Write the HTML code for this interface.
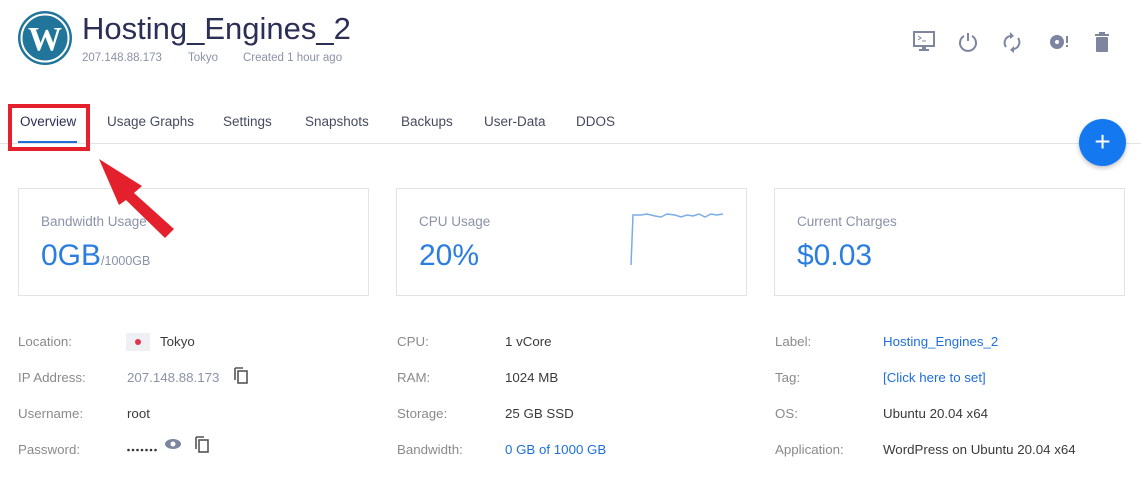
<!DOCTYPE html>
<html><head><meta charset="utf-8"><style>
*{margin:0;padding:0;box-sizing:border-box}
body{width:1141px;height:483px;background:#fff;font-family:"Liberation Sans",sans-serif;position:relative;overflow:hidden;color:#414141}
.a{position:absolute;white-space:nowrap}
.lab{color:#8a8a8a;font-size:13.3px}
.val{color:#3a3a3a;font-size:13.3px}
.blue{color:#1e6fdc}
.card{position:absolute;top:188px;width:351px;height:108px;border:1px solid #e3e3e3}
.ct{position:absolute;left:22px;top:25px;font-size:13.5px;color:#8a92a8}
.cv{position:absolute;left:22px;top:50px;font-size:30px;color:#2b7de0;font-weight:300}
.tab{position:absolute;top:114px;font-size:13.5px;color:#454b5e}
</style></head><body>
<svg class="a" style="left:18px;top:11px" width="54" height="54" viewBox="0 0 54 54">
<circle cx="27" cy="27" r="27" fill="#21759b"/><circle cx="27" cy="27" r="23.5" fill="none" stroke="#fff" stroke-width="2"/>
<text x="27" y="39" font-family="Liberation Serif" font-weight="bold" font-size="34" fill="#fff" text-anchor="middle">W</text></svg>
<div class="a" style="left:82px;top:11px;font-size:31px;color:#2b2f55">Hosting_Engines_2</div>
<div class="a" style="left:82px;top:52px;font-size:11.5px;color:#8a92a8">207.148.88.173</div>
<div class="a" style="left:188px;top:52px;font-size:11.5px;color:#8a92a8">Tokyo</div>
<div class="a" style="left:243px;top:52px;font-size:11.5px;color:#8a92a8">Created 1 hour ago</div>
<svg class="a" style="left:910px;top:28px" width="210" height="30" viewBox="0 0 210 30" fill="#7d869e">
<rect x="4" y="4" width="20" height="14" fill="none" stroke="#7d869e" stroke-width="2"/><path d="M8 8l3 2-3 2M12 13h4" stroke="#7d869e" stroke-width="1" fill="none"/><rect x="12" y="18" width="4" height="3"/><rect x="9" y="21" width="10" height="2"/>
<path d="M58 5v8M54 8a8 8 0 1 0 8 0" stroke="#7d869e" stroke-width="2" fill="none"/>
<path d="M100 8a7 7 0 0 0-4 11M108 10a7 7 0 0 1-4 11" stroke="#7d869e" stroke-width="2" fill="none"/><path d="M100 4l4 4-4 3zM104 18l-4 4 4 3z"/>
<circle cx="147" cy="14" r="7"/><circle cx="147" cy="14" r="2" fill="#fff"/><rect x="156" y="8" width="2" height="7"/><rect x="156" y="17" width="2" height="2"/>
<rect x="186" y="9" width="12" height="15" rx="1"/><rect x="185" y="6" width="14" height="2"/><rect x="189" y="4" width="6" height="2"/>
</svg>
<div class="tab" style="left:20px;color:#2b2f55">Overview</div>
<div class="a" style="left:18px;top:141px;width:59px;height:3px;background:#1e6fdc"></div>
<div class="tab" style="left:107px">Usage Graphs</div>
<div class="tab" style="left:223px">Settings</div>
<div class="tab" style="left:305px">Snapshots</div>
<div class="tab" style="left:401px">Backups</div>
<div class="tab" style="left:484px">User-Data</div>
<div class="tab" style="left:576px">DDOS</div>
<div class="a" style="left:0;top:143px;width:1141px;height:1px;background:#e3e3e3"></div>
<div class="a" style="left:8px;top:104px;width:82px;height:47px;border:4px solid #e3202b"></div>
<div class="a" style="left:1079px;top:119px;width:47px;height:47px;border-radius:50%;background:#1479f0;box-shadow:0 2px 5px rgba(0,0,0,.25);color:#fff;font-size:28px;text-align:center;line-height:45px">+</div>
<div class="card" style="left:18px"><div class="ct">Bandwidth Usage</div><div class="cv">0GB<span style="font-size:12.5px;color:#8a92a8;font-weight:normal">/1000GB</span></div></div>
<div class="card" style="left:396px"><div class="ct">CPU Usage</div><div class="cv">20%</div>
<svg class="a" style="left:230px;top:20px" width="100" height="60"><polyline points="4,56 6,6 14,6 20,5 28,7 34,8 40,5 48,6 54,8 60,6 66,7 72,5 78,8 84,5 90,6 96,5" fill="none" stroke="#7aade6" stroke-width="1.5"/></svg></div>
<div class="card" style="left:774px"><div class="ct">Current Charges</div><div class="cv">$0.03</div></div>
<svg class="a" style="left:0;top:0" width="200" height="260"><polygon points="99,159 142,186 134,193 174,229 165,238 126,200 119,205" fill="#e3202b"/></svg>
<div class="a lab" style="left:18px;top:334px">Location:</div>
<div class="a" style="left:126px;top:333px;width:24px;height:18px;background:#eff0f4"></div><div class="a" style="left:135px;top:339px;width:6px;height:6px;border-radius:50%;background:#e0344c"></div>
<div class="a val" style="left:160px;top:334px">Tokyo</div>
<div class="a lab" style="left:18px;top:370px">IP Address:</div>
<div class="a" style="left:127px;top:370px;font-size:13.3px;color:#8a92a8">207.148.88.173</div>
<svg class="a" style="left:233px;top:367px" width="16" height="18"><path d="M2 1v12M2 1h8" stroke="#555" stroke-width="1.6" fill="none"/><rect x="5" y="4" width="9" height="12" fill="none" stroke="#555" stroke-width="1.6"/></svg>
<div class="a lab" style="left:18px;top:406px">Username:</div>
<div class="a val" style="left:127px;top:406px">root</div>
<div class="a lab" style="left:18px;top:442px">Password:</div>
<svg class="a" style="left:127px;top:448px" width="32" height="4"><g fill="#333"><circle cx="1.5" cy="2" r="1.3"/><circle cx="6" cy="2" r="1.3"/><circle cx="10.5" cy="2" r="1.3"/><circle cx="15" cy="2" r="1.3"/><circle cx="19.5" cy="2" r="1.3"/><circle cx="24" cy="2" r="1.3"/><circle cx="28.5" cy="2" r="1.3"/></g></svg>
<svg class="a" style="left:164px;top:437px" width="18" height="14"><ellipse cx="9" cy="7" rx="8" ry="5" fill="#7d869e"/><circle cx="9" cy="7" r="2.5" fill="#fff"/></svg>
<svg class="a" style="left:194px;top:436px" width="16" height="18"><path d="M2 1v12M2 1h8" stroke="#555" stroke-width="1.6" fill="none"/><rect x="5" y="4" width="9" height="12" fill="none" stroke="#555" stroke-width="1.6"/></svg>
<div class="a lab" style="left:397px;top:334px">CPU:</div><div class="a val" style="left:505px;top:334px">1 vCore</div>
<div class="a lab" style="left:397px;top:370px">RAM:</div><div class="a val" style="left:505px;top:370px">1024 MB</div>
<div class="a lab" style="left:397px;top:406px">Storage:</div><div class="a val" style="left:505px;top:406px">25 GB SSD</div>
<div class="a lab" style="left:397px;top:442px">Bandwidth:</div><div class="a val blue" style="left:505px;top:442px">0 GB of 1000 GB</div>
<div class="a lab" style="left:775px;top:334px">Label:</div><div class="a val blue" style="left:883px;top:334px">Hosting_Engines_2</div>
<div class="a lab" style="left:775px;top:370px">Tag:</div><div class="a val blue" style="left:883px;top:370px">[Click here to set]</div>
<div class="a lab" style="left:775px;top:406px">OS:</div><div class="a val" style="left:883px;top:406px">Ubuntu 20.04 x64</div>
<div class="a lab" style="left:775px;top:442px">Application:</div><div class="a val" style="left:883px;top:442px">WordPress on Ubuntu 20.04 x64</div>
</body></html>
